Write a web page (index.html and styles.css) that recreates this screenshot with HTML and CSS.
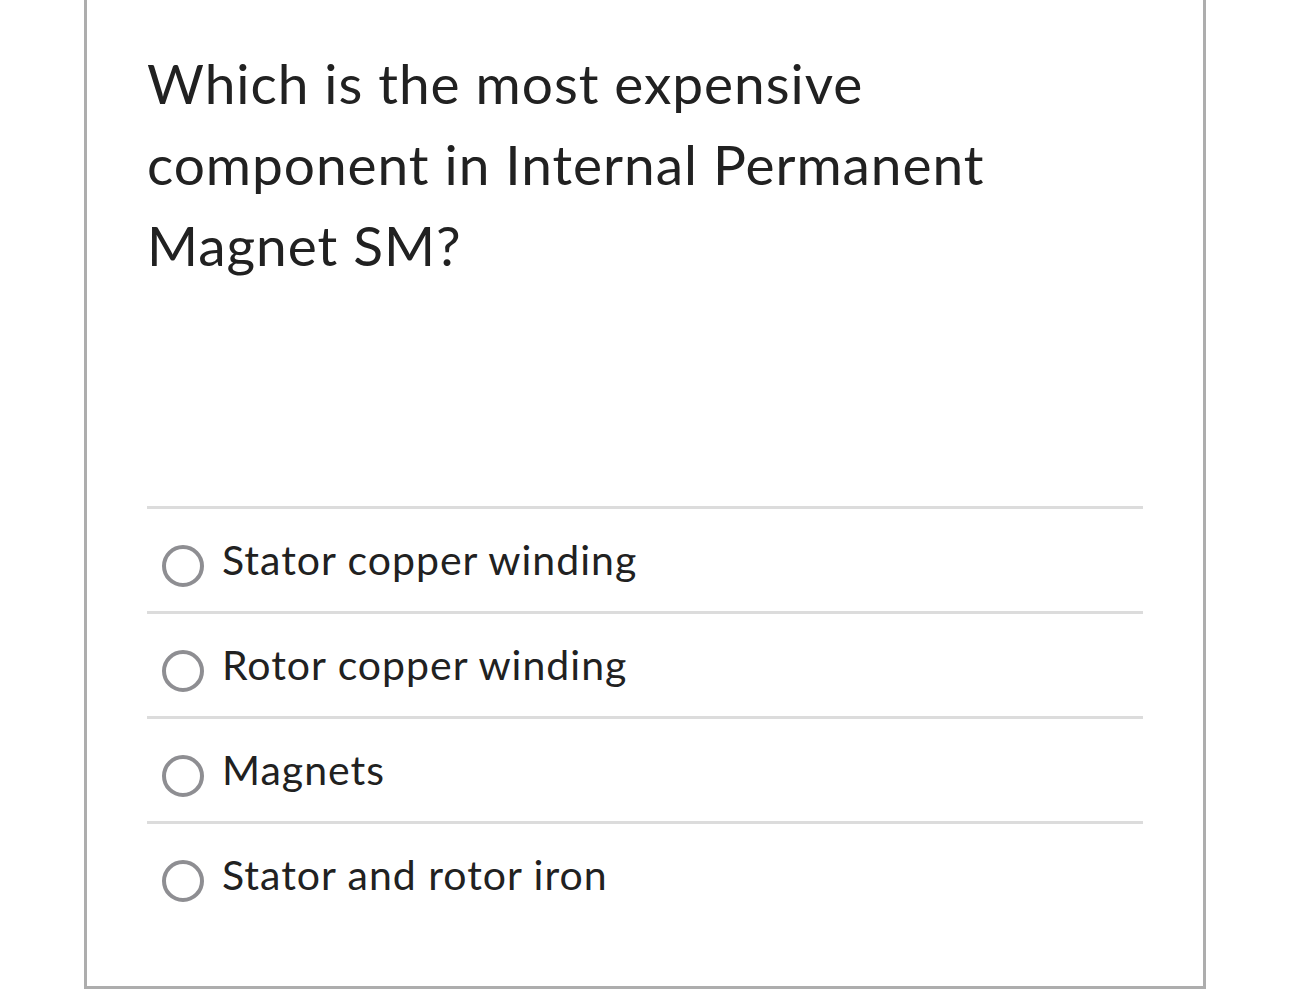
FILE: index.html
```html
<!DOCTYPE html>
<html>
<head>
<meta charset="utf-8">
<link rel="stylesheet" href="styles.css">
</head>
<body>
<div class="card">
  <div class="question">Which is the most expensive component in Internal Permanent Magnet SM?</div>
  <div class="options">
    <div class="option"><span class="radio"></span><span class="label">Stator copper winding</span></div>
    <div class="option"><span class="radio"></span><span class="label">Rotor copper winding</span></div>
    <div class="option"><span class="radio"></span><span class="label">Magnets</span></div>
    <div class="option"><span class="radio"></span><span class="label">Stator and rotor iron</span></div>
  </div>
</div>
</body>
</html>
```

FILE: styles.css
```css
html, body {
  margin: 0;
  padding: 0;
  background: #ffffff;
}
body {
  font-family: Lato, "Noto Sans", sans-serif;
  color: #212121;
}
.card {
  box-sizing: border-box;
  margin-left: 84px;
  width: 1122px;
  border: 3px solid #adadad;
  border-top: none;
  padding: 43px 60px 60px 60px;
}
.question {
  font-size: 55px;
  line-height: 81px;
  letter-spacing: 0.95px;
  width: 900px;
  margin-bottom: 220px;
}
.option {
  display: flex;
  align-items: center;
  height: 102px;
  border-top: 3px solid #dcdcdc;
}
.radio {
  box-sizing: border-box;
  width: 42px;
  height: 42px;
  border: 4px solid #8e8e92;
  border-radius: 50%;
  margin-left: 15px;
  margin-top: 12px;
  flex: none;
}
.label {
  margin-left: 18px;
  font-size: 41px;
  line-height: 50px;
  letter-spacing: 1px;
}
```
